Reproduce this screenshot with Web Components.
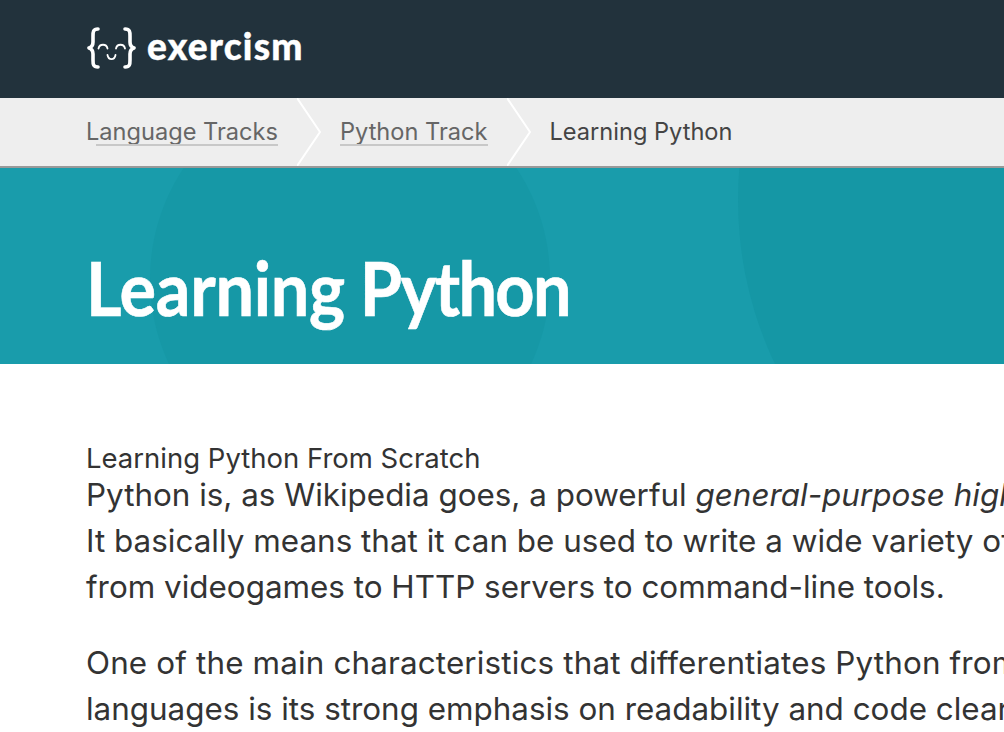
<!doctype html>
<html>
<head>
<meta charset="utf-8">
<style>
  html, body { margin: 0; height: 732px; overflow: hidden; background: #fff; }
  article-body .tight { letter-spacing: 0.02px; }
  article-body .loose { letter-spacing: 0.15px; }
</style>
</head>
<body>
<site-header></site-header>
<bread-crumbs>
  <a href="#" class="offset">Language Tracks</a>
  <a href="#">Python Track</a>
  <span>Learning Python</span>
</bread-crumbs>
<page-hero><span class="word">Learning</span> Python</page-hero>
<article-body>
  <span slot="lead">Learning Python From Scratch</span>
  <p>Python is, as Wikipedia goes, a powerful <em>general-purpose high-level programming language</em>.<br><span class="tight">It basically means that it can be used to write a wide variety of different kinds of software,</span><br>from videogames to HTTP servers to command-line tools.</p>
  <p><span class="loose">One of the main characteristics that differentiates Python from other programming</span><br>languages is its strong emphasis on readability and code clearness.</p>
</article-body>
<script>
class SiteHeader extends HTMLElement {
  constructor() {
    super()
    this.attachShadow({ mode: "open" }).innerHTML = `
      <style>
        :host { display: flex; align-items: center; gap: 11px; height: 98px; padding-left: 87px; background: #22323c; color: #fff; }
        svg { display: block; margin-bottom: 3px; }
        span { font: 900 37px/1 "Lato", sans-serif; letter-spacing: 1.25px; -webkit-text-stroke: .4px #fff; position: relative; top: -4px; }
      </style>
      <svg width="49" height="42" viewBox="0 0 49 42" fill="none" stroke="#fff" stroke-linecap="round" stroke-linejoin="round">
        <path stroke-width="3.6" d="M11 2C6 2 6 5 6 9v6c0 3-1 5-4 6 3 1 4 3 4 6v6c0 4 0 7 5 7"/>
        <path stroke-width="3.6" d="M38 2c5 0 5 3 5 7v6c0 3 1 5 4 6-3 1-4 3-4 6v6c0 4 0 7-5 7"/>
        <path stroke-width="1.8" d="M11.5 21.5c1-5 8-5 9 0M29 21.5c1-5 8-5 9 0M20.5 28c1 5.5 7 5.5 8 0"/>
      </svg>
      <span>exercism</span>`
  }
}

class BreadCrumbs extends HTMLElement {
  constructor() {
    super()
    this.attachShadow({ mode: "open" }).innerHTML = `
      <style>
        :host { display: block; background: #eee; border-bottom: 2px solid #999; font: 400 23.6px/1 "Inter", sans-serif; color: #444; }
        .row { display: flex; align-items: center; height: 68px; padding-left: 86px; }
        svg { flex: none; margin: 0 19px; display: block; }
      </style>
      <div class="row"></div>`
    const row = this.shadowRoot.querySelector(".row")
    const items = [...this.children]
    items.forEach((item, index) => {
      const crumb = document.createElement("crumb-link")
      crumb.textContent = item.textContent
      if (item.tagName === "A") crumb.setAttribute("linked", "")
      if (item.classList.contains("offset")) crumb.setAttribute("offset", "")
      row.append(crumb)
      if (index < items.length - 1) {
        row.insertAdjacentHTML("beforeend", `<svg width="24" height="68" viewBox="0 0 24 68" fill="none" stroke="#fff" stroke-width="2"><path d="M0 0l23 34L0 68"/></svg>`)
      }
    })
  }
}

class CrumbLink extends HTMLElement {
  constructor() {
    super()
    this.attachShadow({ mode: "open" }).innerHTML = `
      <style>
        :host { display: block; position: relative; padding: 8px 0 8px; }
        :host([linked]) { color: #666; }
        :host([linked])::after { content: ""; position: absolute; left: 0; right: 0; bottom: 6px; height: 2px; background: #c8c8c8; }
        :host([offset])::after { left: 10px; }
      </style>
      <slot></slot>`
  }
}

class PageHero extends HTMLElement {
  constructor() {
    super()
    this.attachShadow({ mode: "open" }).innerHTML = `
      <style>
        :host { display: block; position: relative; overflow: hidden; height: 196px; background: #199cab; color: #fff; }
        i { position: absolute; border-radius: 50%; background: #1698a6; }
        .one { left: 150px; top: -89px; width: 400px; height: 400px; }
        .two { left: 738px; top: -350px; width: 764px; height: 764px; background: #1597a5; }
        h1 { position: relative; margin: 0; padding: 77px 0 0 86px; font: 700 75px/84px "Lato", sans-serif; letter-spacing: -1.9px; -webkit-text-stroke: .6px #fff; transform: scaleX(.912); transform-origin: 86px 0; white-space: nowrap; }
        ::slotted(.word) { letter-spacing: -.3px; }
      </style>
      <i class="one"></i><i class="two"></i>
      <h1><slot></slot></h1>`
  }
}

class ArticleBody extends HTMLElement {
  constructor() {
    super()
    this.attachShadow({ mode: "open" }).innerHTML = `
      <style>
        :host { display: block; padding: 80px 0 0 86px; width: 1400px; font: 400 31.4px/46px "Inter", sans-serif; color: #333; }
        .lead { font-size: 27.5px; line-height: 28px; }
        ::slotted(p) { margin: 0 0 30px; }
      </style>
      <div class="lead"><slot name="lead"></slot></div>
      <slot></slot>`
  }
}

customElements.define("crumb-link", CrumbLink)
customElements.define("site-header", SiteHeader)
customElements.define("bread-crumbs", BreadCrumbs)
customElements.define("page-hero", PageHero)
customElements.define("article-body", ArticleBody)
</script>
</body>
</html>
